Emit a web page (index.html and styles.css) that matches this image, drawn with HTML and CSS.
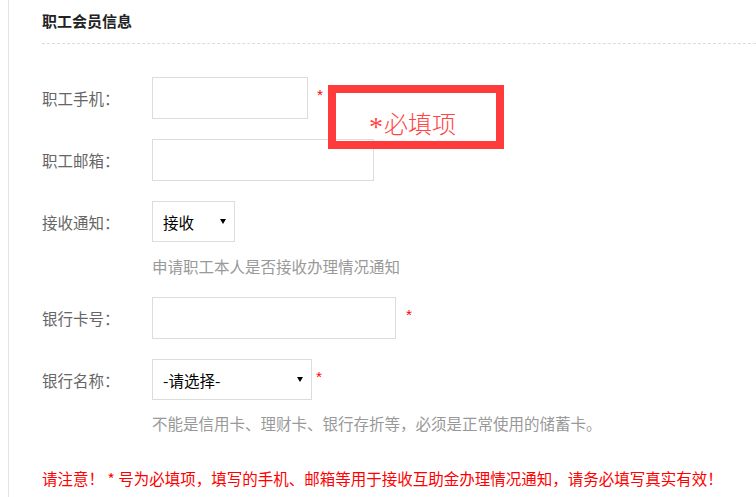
FILE: index.html
```html
<!DOCTYPE html>
<html lang="zh-CN">
<head>
<meta charset="utf-8">
<title>职工会员信息</title>
<link rel="stylesheet" href="styles.css">
</head>
<body>
<div class="page">
  <div class="section-head"><h2 class="title">职工会员信息</h2></div>
  <div class="form">
    <div class="row">
      <span class="label">职工手机：</span>
      <div class="input w-phone"></div>
      <span class="req req-phone">*</span>
    </div>
    <div class="row">
      <span class="label">职工邮箱：</span>
      <div class="input w-mail"></div>
    </div>
    <div class="row row-select">
      <span class="label">接收通知：</span>
      <div class="select w-notify"><span>接收</span><i class="caret"></i></div>
    </div>
    <p class="help help-1">申请职工本人是否接收办理情况通知</p>
    <div class="row">
      <span class="label">银行卡号：</span>
      <div class="input w-card"></div>
      <span class="req req-card">*</span>
    </div>
    <div class="row row-select">
      <span class="label">银行名称：</span>
      <div class="select w-bank"><span>-请选择-</span><i class="caret"></i></div>
      <span class="req req-bank">*</span>
    </div>
    <p class="help help-2">不能是信用卡、理财卡、银行存折等，必须是正常使用的储蓄卡。</p>
  </div>
  <p class="note">请注意！ * 号为必填项，填写的手机、邮箱等用于接收互助金办理情况通知，请务必填写真实有效！</p>
  <div class="callout"><span class="callout-star">*</span>必填项</div>
</div>
</body>
</html>
```
FILE: styles.css
```css
html, body {
  margin: 0;
  padding: 0;
  background: #fff;
}
body {
  font-family: "Noto Sans CJK SC", "Liberation Sans", sans-serif;
  font-size: 15.5px;
  color: #666;
}
.page {
  position: relative;
  margin-left: 8px;
  border-left: 1px solid #e3e3e3;
  min-height: 497px;
  box-sizing: border-box;
  overflow: hidden;
}
.section-head {
  margin-left: 33px;
  padding: 10px 0 12px;
  border-bottom: 1px dashed #dcdcdc;
}
.title {
  margin: 0;
  font-size: 15px;
  line-height: 21px;
  font-weight: bold;
  color: #222;
}
.form {
  margin: 33px 0 0 33px;
  display: flex;
  flex-direction: column;
}
.row {
  display: flex;
  align-items: center;
  height: 42px;
  margin-bottom: 20px;
}
.row-select {
  height: 41px;
}
.label {
  width: 110px;
  flex: none;
  color: #666;
  line-height: 20px;
}
.input, .select {
  box-sizing: border-box;
  height: 100%;
  border: 1px solid #dcdcdc;
  background: #fff;
}
.select {
  display: flex;
  align-items: center;
  justify-content: space-between;
  padding: 0 8px 0 10px;
  color: #000;
}
.caret {
  display: block;
  width: 0;
  height: 0;
  border-left: 3px solid transparent;
  border-right: 3px solid transparent;
  border-top: 5px solid #000;
}
.w-phone { width: 156px; }
.w-mail { width: 222px; }
.w-card { width: 244px; }
.w-notify { width: 83px; }
.w-bank { width: 160px; }
.req {
  font-family: "Liberation Sans", sans-serif;
  color: #f00;
  font-size: 15.5px;
  line-height: 20px;
  align-self: center;
  margin-top: -6px;
}
.req-phone { margin-left: 9px; }
.req-card { margin-left: 10px; }
.req-bank { margin-left: 4px; }
.help {
  margin: 0 0 0 110px;
  line-height: 20px;
  color: #999;
}
.help-1 {
  margin-top: -6px;
  margin-bottom: 21px;
}
.help-2 {
  margin-top: -7px;
}
.note {
  margin: 35px 0 0 33px;
  line-height: 20px;
  color: #f00;
}
.callout {
  position: absolute;
  left: 319px;
  top: 85px;
  width: 176px;
  height: 64px;
  box-sizing: border-box;
  border: 8px solid #ff3b3b;
  color: #f44;
  font-family: "Noto Sans CJK SC", serif;
  font-weight: 300;
  font-size: 24px;
  line-height: 30px;
  padding: 15px 0 0 33px;
  white-space: nowrap;
}
.callout-star {
  display: inline-block;
  font-family: "Liberation Serif", serif;
  font-size: 28px;
  vertical-align: -3px;
  margin-right: 1px;
}
```
